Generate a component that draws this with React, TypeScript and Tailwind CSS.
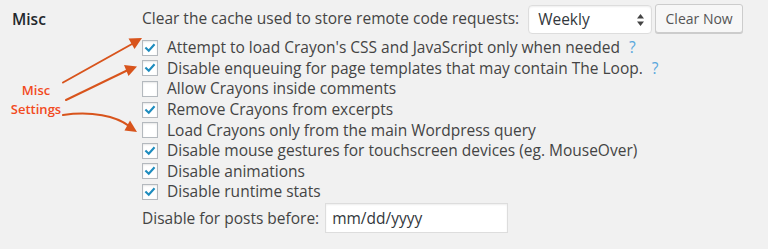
import React from "react";

const options: { label: string; checked: boolean; help?: boolean }[] = [
  { label: "Attempt to load Crayon's CSS and JavaScript only when needed", checked: true, help: true },
  { label: "Disable enqueuing for page templates that may contain The Loop.", checked: true, help: true },
  { label: "Allow Crayons inside comments", checked: false },
  { label: "Remove Crayons from excerpts", checked: true },
  { label: "Load Crayons only from the main Wordpress query", checked: false },
  { label: "Disable mouse gestures for touchscreen devices (eg. MouseOver)", checked: true },
  { label: "Disable animations", checked: true },
  { label: "Disable runtime stats", checked: true },
];

function Checkbox({ checked }: { checked: boolean }) {
  return (
    <span className="w-4 h-4 shrink-0 bg-white border border-[#b4b9be] shadow-[inset_0_1px_2px_rgba(0,0,0,0.1)] flex items-center justify-center">
      {checked && (
        <svg width="14" height="14" viewBox="0 0 16 16">
          <path d="M3.6 8.2 L6.6 11.2 L12.4 4.6" fill="none" stroke="#1e8cbe" strokeWidth="2.4" strokeLinecap="square" />
        </svg>
      )}
    </span>
  );
}

export default function App() {
  return (
    <div
      className="relative w-[768px] h-[249px] bg-[#f1f1f1] text-[15.5px] text-[#444] overflow-hidden"
      style={{ fontFamily: '"Open Sans", "Noto Sans", sans-serif' }}
    >
      <div className="flex">
        <div className="w-[130px] pl-3 pt-[9px] leading-5 font-semibold text-[#23282d]">Misc</div>

        <div className="pl-3 pt-1 flex flex-col">
          {/* cache row */}
          <div className="h-[30px] flex items-center">
            <span>Clear the cache used to store remote code requests:</span>
            <div className="relative ml-[9px] mt-[1px]">
              <select
                defaultValue="weekly"
                className="appearance-none w-[124px] h-[29px] pl-[9px] bg-white border border-[#ddd] rounded-[4px] shadow-[inset_0_1px_2px_rgba(0,0,0,0.07)] text-[#32373c] outline-none"
              >
                <option value="weekly">Weekly</option>
              </select>
              <svg className="absolute right-[8px] top-[9px]" width="7" height="12" viewBox="0 0 7 12">
                <path d="M3.5 0 L7 4.5 L0 4.5 Z M3.5 12 L7 7.5 L0 7.5 Z" fill="#444" />
              </svg>
            </div>
            <button className="ml-[3px] w-[88px] h-[29px] bg-[#f7f7f7] border border-[#ccc] rounded-[3px] shadow-[0_1px_0_#ccc] text-[14px] text-[#555] -mt-[1px]">
              Clear Now
            </button>
          </div>

          <div className="mt-[3.5px] flex flex-col">
            {options.map((o) => (
              <div key={o.label} className="h-[20.6px] flex items-center gap-[9px] whitespace-nowrap">
                <Checkbox checked={o.checked} />
                <span>
                  {o.label}
                  {o.help && <span className="ml-[9px] text-[#5aa8dd]">?</span>}
                </span>
              </div>
            ))}
          </div>

          <div className="mt-[1px] h-[30px] flex items-center">
            <span>Disable for posts before:</span>
            <input
              defaultValue="mm/dd/yyyy"
              className="ml-[6px] w-[183px] h-[30px] px-[6px] bg-white border border-[#ddd] shadow-[inset_0_1px_2px_rgba(0,0,0,0.07)] text-[#32373c] outline-none"
            />
          </div>
        </div>
      </div>

      {/* annotation overlay */}
      <div className="absolute left-[10px] top-[81px] w-[52px] text-center text-[13px] leading-[19px] font-semibold text-[#f24a1e]">
        <div>Misc</div>
        <div>Settings</div>
      </div>
      <svg className="absolute left-0 top-0 pointer-events-none" width="768" height="249" viewBox="0 0 768 249">
        <g stroke="#d8541c" strokeWidth="2" fill="none" strokeLinecap="round">
          <path d="M63 82.5 L132 44" />
          <path d="M66 100 L128 70" />
          <path d="M63 115 C 92 111 116 116 129 126" />
        </g>
        <g fill="#d8541c">
          <path d="M142 38 L128.5 38.5 L134.5 49 Z" />
          <path d="M137 66.5 L124 65 L128.5 76 Z" />
          <path d="M137 132 L130 120.5 L124.5 130.5 Z" />
        </g>
      </svg>
    </div>
  );
}
